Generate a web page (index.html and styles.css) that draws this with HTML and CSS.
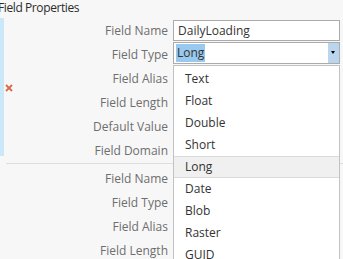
FILE: index.html
```html
<!DOCTYPE html>
<html lang="en">
<head>
<title>Field Properties</title>
<meta charset="UTF-8">
<link rel="stylesheet" href="styles.css">
</head>
<body>
  <div class="title">Field Properties</div>

  <div class="group">
    <div class="bar"></div>
    <svg class="mark" width="8" height="8" viewBox="0 0 8 8">
      <path d="M1 1 L7 7 M7 1 L1 7" stroke="#d9694a" stroke-width="1.8" fill="none"/>
    </svg>
    <div class="rows">
      <label class="lbl">Field Name</label>
      <div class="box">DailyLoading</div>
      <label class="lbl">Field Type</label>
      <div class="combo">
        <span class="sel">Long</span>
        <span class="arrow"></span>
        <ul class="list">
          <li>Text</li>
          <li>Float</li>
          <li>Double</li>
          <li>Short</li>
          <li class="hover">Long</li>
          <li>Date</li>
          <li>Blob</li>
          <li>Raster</li>
          <li>GUID</li>
        </ul>
      </div>
      <label class="lbl">Field Alias</label>
      <div></div>
      <label class="lbl">Field Length</label>
      <div></div>
      <label class="lbl">Default Value</label>
      <div></div>
      <label class="lbl">Field Domain</label>
      <div></div>
    </div>
  </div>

  <div class="sep"></div>

  <div class="rows plain">
    <label class="lbl">Field Name</label>
    <div></div>
    <label class="lbl">Field Type</label>
    <div></div>
    <label class="lbl">Field Alias</label>
    <div></div>
    <label class="lbl">Field Length</label>
    <div></div>
  </div>
</body>
</html>
```

FILE: styles.css
```css
body {
    margin: 0;
    background-color: #f7f7f7;
    font-family: "Open Sans", "Noto Sans", sans-serif;
    font-size: 12px;
    color: #333333;
    overflow: hidden;
}
.title {
    height: 18px;
    line-height: 15px;
    margin-left: -2px;
    letter-spacing: -0.4px;
    color: #2b2b2b;
}
.group {
    display: flex;
    position: relative;
}
.bar {
    width: 4px;
    margin-bottom: 6px;
    background-color: #cbe8f9;
}
.mark {
    position: absolute;
    left: 5px;
    top: 66px;
}
.rows {
    display: grid;
    grid-template-columns: 164px 167px;
    grid-auto-rows: 24px;
    column-gap: 5px;
    align-items: center;
}
.plain {
    margin-left: 4px;
    margin-top: 2px;
}
.lbl {
    text-align: right;
    color: #6e6e6e;
}
.box, .combo {
    height: 21px;
    box-sizing: border-box;
    border: 1px solid #ababab;
    background-color: #ffffff;
    line-height: 19px;
    padding-left: 4px;
}
.box {
    margin-top: 1px;
}
.combo {
    position: relative;
    height: 22px;
    padding-left: 2px;
    line-height: 20px;
    align-self: start;
}
.sel {
    display: inline-block;
    line-height: 18px;
    padding: 0 1px;
    margin-top: 1px;
    background-color: #99c9ef;
}
.arrow {
    position: absolute;
    right: 0;
    top: 0;
    bottom: 0;
    width: 11px;
    background-color: #b9d6ee;
}
.arrow::after {
    content: "";
    position: absolute;
    left: 3px;
    top: 8px;
    border-left: 2.5px solid transparent;
    border-right: 2.5px solid transparent;
    border-top: 3px solid #000000;
}
.list {
    position: absolute;
    left: -1px;
    right: -1px;
    top: 22px;
    margin: 0;
    padding: 2px 0 0;
    list-style: none;
    background-color: #ffffff;
    border: 1px solid #c2c2c2;
}
.list li {
    height: 22px;
    line-height: 22px;
    padding-left: 11px;
    box-sizing: border-box;
}
.list li.hover {
    background-color: #f0f0f0;
    border-top: 1px solid #dadada;
    border-bottom: 1px solid #dadada;
    line-height: 20px;
}
.sep {
    margin-left: 6px;
    margin-top: 1px;
    border-top: 1px solid #dedede;
}
```
